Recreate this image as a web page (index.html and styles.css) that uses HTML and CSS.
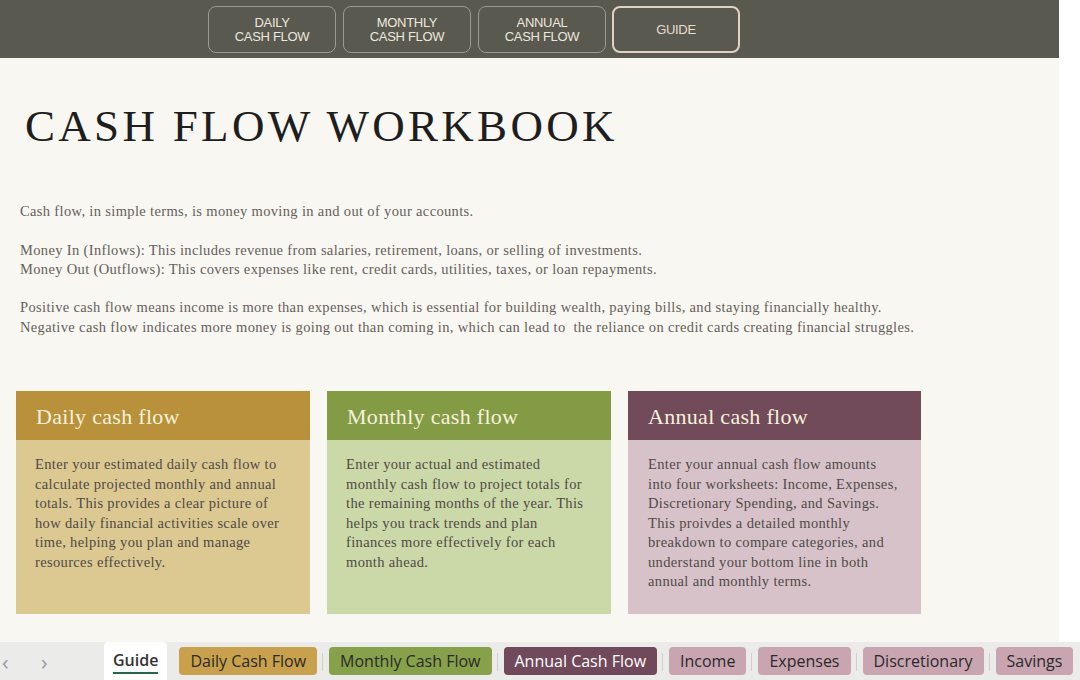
FILE: index.html
```html
<!DOCTYPE html>
<html lang="en">
<head>
  <meta charset="UTF-8">
  <title>Cash Flow Workbook - Guide</title>
  <link rel="stylesheet" href="styles.css">
</head>
<body>
  <div class="sheet">
    <!-- Navegacion superior -->
    <div class="topbar">
      <a class="nav-btn" href="#">Daily<br>Cash Flow</a>
      <a class="nav-btn" href="#">Monthly<br>Cash Flow</a>
      <a class="nav-btn" href="#">Annual<br>Cash Flow</a>
      <a class="nav-btn active" href="#">Guide</a>
    </div>

    <h1>CASH FLOW WORKBOOK</h1>

    <div class="intro">
      <p>Cash flow, in simple terms, is money moving in and out of your accounts.</p>
      <p>Money In (Inflows): This includes revenue from salaries, retirement, loans, or selling of investments.<br>
      Money Out (Outflows): This covers expenses like rent, credit cards, utilities, taxes, or loan repayments.</p>
      <p>Positive cash flow means income is more than expenses, which is essential for building wealth, paying bills, and staying financially healthy.<br>
      Negative cash flow indicates more money is going out than coming in, which can lead to&nbsp; the reliance on credit cards creating financial struggles.</p>
    </div>

    <div class="cards">
      <div class="card daily">
        <h2>Daily cash flow</h2>
        <p>Enter your estimated daily cash flow to calculate projected monthly and annual totals. This provides a clear picture of how daily financial activities scale over time, helping you plan and manage resources effectively.</p>
      </div>
      <div class="card monthly">
        <h2>Monthly cash flow</h2>
        <p>Enter your actual and estimated monthly cash flow to project totals for the remaining months of the year. This helps you track trends and plan finances more effectively for each month ahead.</p>
      </div>
      <div class="card annual">
        <h2>Annual cash flow</h2>
        <p>Enter your annual cash flow amounts into four worksheets: Income, Expenses, Discretionary Spending, and Savings. This proivdes a detailed monthly breakdown to compare categories, and understand your bottom line in both annual and monthly terms.</p>
      </div>
    </div>
  </div>

  <!-- Pestañas de hojas -->
  <div class="tabbar">
    <span class="arrow">&lsaquo;</span>
    <span class="arrow">&rsaquo;</span>
    <span class="tab current">Guide</span>
    <span class="tab t-daily">Daily Cash Flow</span>
    <span class="tab t-monthly">Monthly Cash Flow</span>
    <span class="tab t-annual">Annual Cash Flow</span>
    <span class="tab t-pink">Income</span>
    <span class="tab t-pink">Expenses</span>
    <span class="tab t-pink">Discretionary</span>
    <span class="tab t-pink">Savings</span>
  </div>
</body>
</html>
```

FILE: styles.css
```css
body {
  margin: 0;
  background: #fff;
  font-family: "Liberation Serif", serif;
  overflow: hidden;
}
.sheet {
  width: 1059px;
  height: 642px;
  background: #f9f7f2;
  overflow: hidden;
}
.topbar {
  height: 58px;
  background: #5a5950;
  display: flex;
  gap: 7px;
  padding-left: 208px;
  padding-top: 6px;
  box-sizing: border-box;
}
.nav-btn {
  width: 128px;
  height: 47px;
  box-sizing: border-box;
  border: 1.5px solid #9c9a8d;
  border-radius: 8px;
  display: flex;
  align-items: center;
  justify-content: center;
  text-align: center;
  color: #ece8dc;
  text-decoration: none;
  text-transform: uppercase;
  font-family: "Liberation Sans", Arial, sans-serif;
  font-size: 13px;
  line-height: 14px;
  letter-spacing: -0.3px;
}
.nav-btn.active {
  border: 2px solid #e3d2c2;
  margin-left: -1px;
  color: #e8dccd;
}
h1 {
  margin: 43px 0 0 25px;
  font-weight: normal;
  font-size: 45px;
  letter-spacing: 3.3px;
  color: #1e1e1e;
  line-height: 50px;
}
.intro {
  margin: 51px 0 0 20px;
  font-size: 14.5px;
  letter-spacing: 0.35px;
  line-height: 19.3px;
  color: #65605a;
}
.intro p {
  margin: 0 0 19.3px;
}
.cards {
  display: flex;
  gap: 17px;
  margin: 54px 0 0 16px;
}
.card {
  width: 294px;
  height: 223px;
}
.card.monthly {
  width: 284px;
}
.card.annual {
  width: 293px;
}
.card h2 {
  margin: 0;
  height: 49px;
  padding-left: 20px;
  font-weight: normal;
  font-size: 22px;
  letter-spacing: 0.3px;
  line-height: 52px;
  color: #f7f1dc;
}
.card p {
  margin: 0;
  padding: 15px 23px 0 19px;
  font-size: 14.5px;
  letter-spacing: 0.35px;
  line-height: 19.5px;
  color: #4f4a45;
}
.monthly p { padding-right: 19px; }
.annual p { padding: 15px 20px 0 20px; }
.daily h2 { background: #b8913a; }
.daily { background: #dcc891; }
.monthly h2 { background: #849b45; }
.monthly { background: #cbd8a8; }
.annual h2 { background: #714b5a; }
.annual { background: #d7c2ca; }

.tabbar {
  height: 38px;
  background: #ebebea;
  display: flex;
  align-items: center;
  font-family: "Open Sans", "Noto Sans", sans-serif;
  font-size: 16px;
  white-space: nowrap;
}
.arrow {
  color: #9a9a9a;
  font-size: 22px;
  width: 37px;
  padding-left: 2px;
  line-height: 20px;
}
.tab {
  height: 28px;
  line-height: 28px;
  padding: 0 11px;
  border-radius: 4px;
  color: #2a2a2a;
  margin-left: 12px;
  position: relative;
}
.tab + .tab::before {
  content: "";
  position: absolute;
  left: -7px;
  top: 6px;
  height: 18px;
  border-left: 1px solid #d0d0d0;
}
.tab.current {
  background: #fff;
  height: 38px;
  line-height: 36px;
  border-radius: 4px 4px 0 0;
  margin-left: 26px;
  font-weight: 600;
  color: #333;
  padding: 0 9px;
}
.tab.current::after {
  content: "";
  position: absolute;
  left: 9px;
  right: 9px;
  bottom: 6px;
  border-bottom: 2px solid #1f6b45;
}
.tab.current + .tab::before { display: none; }
.t-daily { background: #c9a04b; }
.t-monthly { background: #87a04a; }
.t-annual { background: #704a5a; color: #fff; }
.t-pink { background: #c8a5b0; }
```
